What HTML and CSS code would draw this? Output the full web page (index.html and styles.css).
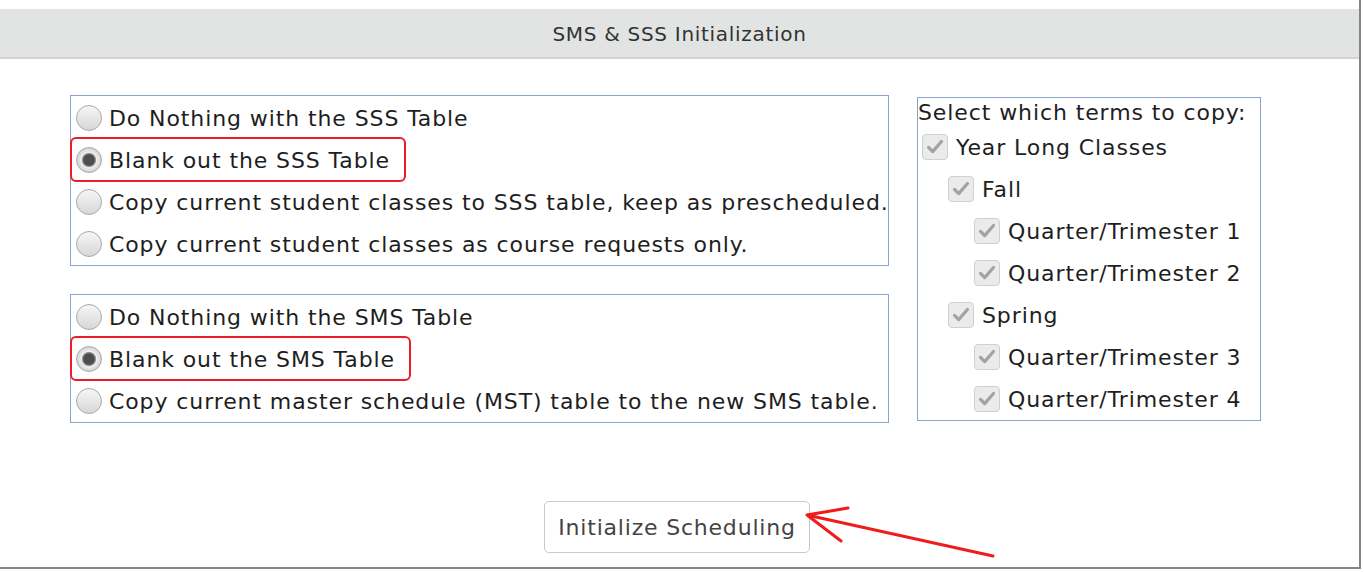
FILE: index.html
```html
<!DOCTYPE html>
<html lang="en">
<head>
    <meta charset="UTF-8">
    <title>SMS &amp; SSS Initialization</title>
    <link rel="stylesheet" href="styles.css">
</head>
<body>
    <div class="frame">
        <div class="head">SMS &amp; SSS Initialization</div>

        <div class="cols">
            <div class="left">
                <!-- SSS tablosu -->
                <div class="group">
                    <div class="row"><span class="opt"><span class="radio"></span>Do Nothing with the SSS Table</span></div>
                    <div class="row"><span class="opt marked"><span class="radio on"></span>Blank out the SSS Table</span></div>
                    <div class="row"><span class="opt"><span class="radio"></span>Copy current student classes to SSS table, keep as prescheduled.</span></div>
                    <div class="row"><span class="opt"><span class="radio"></span>Copy current student classes as course requests only.</span></div>
                </div>

                <!-- SMS tablosu -->
                <div class="group">
                    <div class="row"><span class="opt"><span class="radio"></span>Do Nothing with the SMS Table</span></div>
                    <div class="row"><span class="opt marked"><span class="radio on"></span>Blank out the SMS Table</span></div>
                    <div class="row"><span class="opt"><span class="radio"></span>Copy current master schedule (MST) table to the new SMS table.</span></div>
                </div>
            </div>

            <div class="terms">
                <div class="terms-title">Select which terms to copy:</div>
                <div class="row lvl0"><span class="check"><svg viewBox="0 0 26 26"><path d="M6 13.5 L10.5 18 L20 7"/></svg></span>Year Long Classes</div>
                <div class="row lvl1"><span class="check"><svg viewBox="0 0 26 26"><path d="M6 13.5 L10.5 18 L20 7"/></svg></span>Fall</div>
                <div class="row lvl2"><span class="check"><svg viewBox="0 0 26 26"><path d="M6 13.5 L10.5 18 L20 7"/></svg></span>Quarter/Trimester 1</div>
                <div class="row lvl2"><span class="check"><svg viewBox="0 0 26 26"><path d="M6 13.5 L10.5 18 L20 7"/></svg></span>Quarter/Trimester 2</div>
                <div class="row lvl1"><span class="check"><svg viewBox="0 0 26 26"><path d="M6 13.5 L10.5 18 L20 7"/></svg></span>Spring</div>
                <div class="row lvl2"><span class="check"><svg viewBox="0 0 26 26"><path d="M6 13.5 L10.5 18 L20 7"/></svg></span>Quarter/Trimester 3</div>
                <div class="row lvl2"><span class="check"><svg viewBox="0 0 26 26"><path d="M6 13.5 L10.5 18 L20 7"/></svg></span>Quarter/Trimester 4</div>
            </div>
        </div>

        <div class="actions">
            <button class="btn">Initialize Scheduling</button>
        </div>

        <!-- kırmızı ok -->
        <svg class="arrow" width="1364" height="572" viewBox="0 0 1364 572">
            <path d="M993 556 L807 515 M807 515 L848 508 M807 515 L841 541"/>
        </svg>
    </div>
</body>
</html>
```

FILE: styles.css
```css
/* Sayfa genel */
html, body {
    margin: 0;
    padding: 0;
    background: #fff;
    font-family: "DejaVu Sans", sans-serif;
    color: #1e1e1e;
}

.frame {
    position: relative;
    width: 1359px;
    height: 558px;
    padding-top: 9px;
    border-right: 2px solid #858585;
    border-bottom: 2px solid #858585;
}

.head {
    height: 48px;
    line-height: 50px;
    background-color: #e2e3e3;
    border-bottom: 2px solid #d2d3d3;
    text-align: center;
    font-size: 20px;
    letter-spacing: 0.7px;
    color: #333;
}

.cols {
    display: flex;
    align-items: flex-start;
    gap: 28px;
    padding-left: 70px;
    margin-top: 36px;
    font-size: 22px;
    letter-spacing: 0.9px;
}

.left {
    display: flex;
    flex-direction: column;
    gap: 28px;
    width: 819px;
}

.group {
    border: 1px solid #8aa2cc;
    padding-top: 1px;
}

.row {
    height: 42px;
    display: flex;
    align-items: center;
    white-space: nowrap;
}

.opt {
    position: relative;
    display: inline-flex;
    align-items: center;
    height: 42px;
    padding-left: 5px;
}

/* kırmızı işaret kutusu */
.opt.marked::after {
    content: "";
    position: absolute;
    left: -1px;
    right: -16px;
    top: -2px;
    bottom: -1px;
    border: 2px solid #ee1c24;
    border-radius: 6px;
}

.radio {
    display: inline-block;
    width: 26px;
    height: 26px;
    margin-right: 7px;
    border-radius: 50%;
    border: 1px solid #a9a9a9;
    box-sizing: border-box;
    background: linear-gradient(#f6f6f6, #d7d7d7);
}

.radio.on {
    background: radial-gradient(circle, #4d4d4d 0 5px, #8a8a8a 6.5px, #efefef 7.5px, #e0e0e0 10px, #d2d2d2 12px);
}

.terms {
    width: 344px;
    box-sizing: border-box;
    margin-top: 2px;
    border: 1px solid #8aa2cc;
}

.terms-title {
    height: 28px;
    line-height: 30px;
    white-space: nowrap;
}

.check {
    display: inline-block;
    width: 26px;
    height: 26px;
    margin-right: 8px;
    box-sizing: border-box;
    border: 1px solid #d0d0d0;
    border-radius: 4px;
    background: #ebebeb;
}

.check svg {
    display: block;
    width: 24px;
    height: 24px;
}

.check path {
    fill: none;
    stroke: #a3a3a3;
    stroke-width: 3.5;
    stroke-linecap: round;
    stroke-linejoin: round;
}

.lvl0 { padding-left: 4px; }
.lvl1 { padding-left: 30px; }
.lvl2 { padding-left: 56px; }

.actions {
    display: flex;
    justify-content: center;
    margin-top: 78px;
}

.btn {
    width: 266px;
    height: 52px;
    margin-right: 5px;
    padding: 0 12px;
    background: #fff;
    border: 1px solid #c9c9c9;
    border-radius: 5px;
    font-family: "DejaVu Sans", sans-serif;
    font-size: 22px;
    letter-spacing: 0.8px;
    color: #444;
    white-space: nowrap;
}

.arrow {
    position: absolute;
    left: 0;
    top: 0;
    pointer-events: none;
}

.arrow path {
    fill: none;
    stroke: #f01c1c;
    stroke-width: 3;
    stroke-linecap: round;
}
```
